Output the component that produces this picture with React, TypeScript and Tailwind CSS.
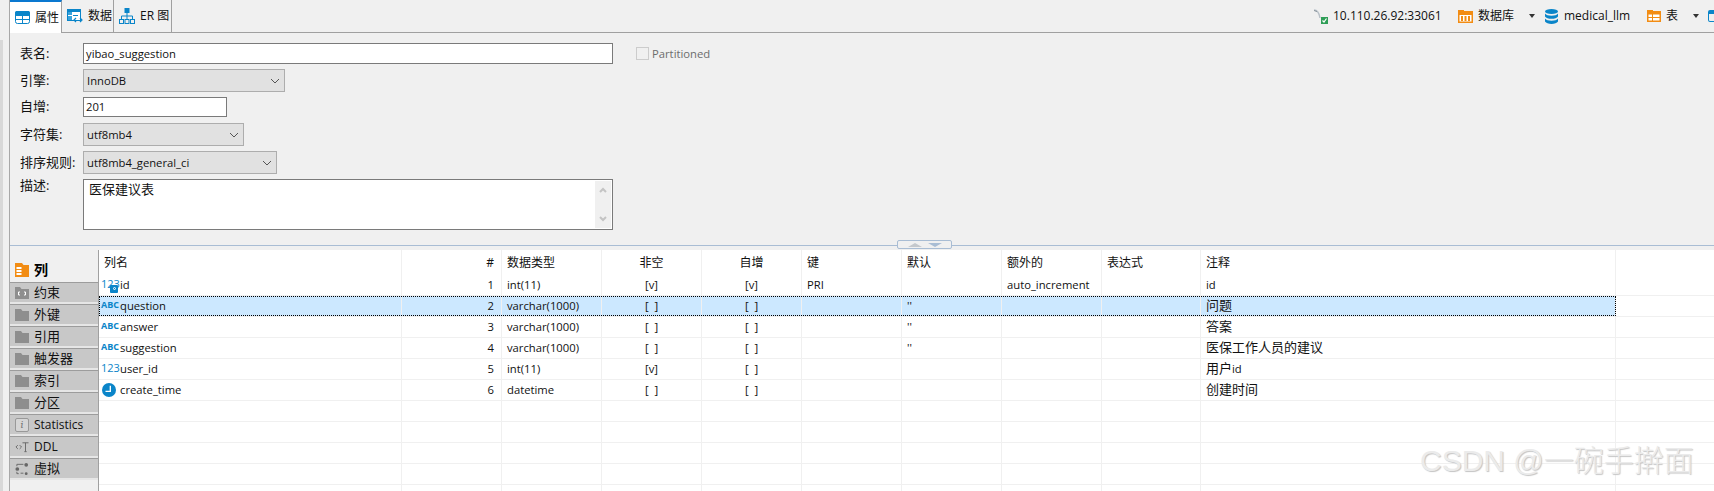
import React from 'react';

const FONT = '[font-family:"Open_Sans","Noto_Sans_CJK_SC",sans-serif]';

function TableTabIcon() {
    return (
        <svg width="15" height="13" viewBox="0 0 15 13">
            <rect x="0.5" y="0.5" width="14" height="12" rx="2" fill="#fff" stroke="#0a85c9" />
            <rect x="0" y="0" width="15" height="5" rx="1.5" fill="#0a85c9" />
            <rect x="7" y="0" width="1" height="13" fill="#0a85c9" />
            <rect x="0" y="8" width="15" height="1" fill="#0a85c9" />
        </svg>
    );
}

function DataTabIcon() {
    return (
        <svg width="16" height="14" viewBox="0 0 16 14">
            <rect x="0.5" y="0.5" width="13" height="11" fill="#fff" stroke="#0a85c9" />
            <rect x="0" y="0" width="14" height="3" fill="#0a85c9" />
            <rect x="1" y="3" width="4" height="8" fill="#39a3dc" />
            <rect x="1" y="6" width="4" height="1" fill="#fff" />
            <rect x="6" y="6" width="5" height="1" fill="#0a85c9" />
            <path d="M9 10l-2 2 2 2M13 10l2 2-2 2" transform="translate(0 -1)" fill="none" stroke="#0a85c9" strokeWidth="1.2" />
        </svg>
    );
}

function ErIcon() {
    return (
        <svg width="16" height="16" viewBox="0 0 16 16" fill="none" stroke="#0a85c9">
            <rect x="6" y="0.5" width="4" height="4" fill="#0a85c9" />
            <path d="M8 5v3M2.5 11V8h11v3M8 8v3" />
            <rect x="0.5" y="11.5" width="4" height="4" />
            <rect x="6" y="11.5" width="4" height="4" />
            <rect x="11.5" y="11.5" width="4" height="4" />
        </svg>
    );
}

function ServerIcon() {
    return (
        <svg width="15" height="15" viewBox="0 0 15 15">
            <path d="M1 1c3 0 5 2 6 8" fill="none" stroke="#b8c0c8" strokeWidth="1.5" />
            <path d="M1 1.500l3 1" stroke="#8a949c" fill="none" />
            <rect x="8" y="8" width="7" height="7" fill="#2f9e57" />
            <path d="M9.500 11.500l1.500 1.500 2.500-3.500" stroke="#fff" fill="none" strokeWidth="1.2" />
        </svg>
    );
}

function OrangeDbIcon() {
    return (
        <svg width="15" height="13" viewBox="0 0 15 13">
            <rect x="0" y="0" width="6" height="3" fill="#f28c13" />
            <rect x="0.750" y="1.750" width="13.500" height="10.500" fill="#fff" stroke="#f28c13" strokeWidth="1.500" />
            <rect x="0" y="2" width="15" height="3" fill="#f28c13" />
            <rect x="3" y="6" width="2" height="5" fill="#f28c13" />
            <rect x="6.500" y="6" width="2" height="5" fill="#f28c13" />
            <rect x="10" y="6" width="2" height="5" fill="#f28c13" />
        </svg>
    );
}

function BlueDbIcon() {
    return (
        <svg width="13" height="15" viewBox="0 0 13 15" fill="#0a85c9">
            <ellipse cx="6.500" cy="2.500" rx="6.500" ry="2.500" />
            <path d="M0 4.500c1 1.600 3.500 2.200 6.500 2.200s5.500-.6 6.500-2.200v3c-1 1.600-3.500 2.300-6.500 2.300S1 9.100 0 7.500z" />
            <path d="M0 9.500c1 1.600 3.500 2.200 6.500 2.200s5.500-.6 6.500-2.200v3c-1 1.600-3.500 2.500-6.500 2.500S1 14.100 0 12.500z" />
        </svg>
    );
}

function OrangeTableIcon() {
    return (
        <svg width="14" height="12" viewBox="0 0 14 12">
            <rect x="0" y="0" width="6" height="3" fill="#f28c13" />
            <rect x="0.750" y="1.750" width="12.500" height="9.500" fill="#fff" stroke="#f28c13" strokeWidth="1.500" />
            <rect x="0" y="2" width="14" height="2.500" fill="#f28c13" />
            <rect x="5" y="4" width="1" height="7" fill="#f28c13" />
            <rect x="1" y="7" width="12" height="1" fill="#f28c13" />
        </svg>
    );
}

function Caret() {
    return <span className="w-0 h-0 shrink-0 border-x-[3.5px] border-x-transparent border-t-[4px] border-t-[#333]" />;
}

function ChevronDown() {
    return (
        <svg width="10" height="6" viewBox="0 0 10 6" fill="none" stroke="#555" strokeWidth="1">
            <path d="M1 1l4 4 4-4" />
        </svg>
    );
}

function FolderIcon() {
    return (
        <svg width="14" height="12" viewBox="0 0 14 12" fill="#8e8e8e">
            <path d="M0 0h6l1.500 2H14v10H0z" />
        </svg>
    );
}

function ColumnsIcon() {
    return (
        <svg width="14" height="14" viewBox="0 0 14 14">
            <path d="M0 0h7l1.500 2H14v12H0z" fill="#f28c13" />
            <rect x="1.500" y="4" width="5" height="2" fill="#fff" />
            <rect x="1.500" y="7" width="5" height="2" fill="#fff" />
            <rect x="1.500" y="10" width="5" height="2" fill="#fff" />
        </svg>
    );
}

function ConstraintIcon() {
    return (
        <svg width="14" height="12" viewBox="0 0 14 12">
            <path d="M0 0h5l1.500 2H14v10H0z" fill="#8e8e8e" />
            <path d="M5 5H3.500v3H5M9 5h1.500v3H9" stroke="#fff" fill="none" />
        </svg>
    );
}

function InfoIcon() {
    return (
        <span className="w-[14px] h-[14px] border border-[#999] rounded-[2px] flex items-center justify-center text-[11px] italic font-serif text-[#777] bg-[#d6d6d6]">
            i
        </span>
    );
}

function DdlIcon() {
    return (
        <svg width="15" height="12" viewBox="0 0 15 12" fill="none" stroke="#666">
            <path d="M3 4L1 6l2 2M5 4l2 2-2 2" />
            <path d="M8 1.500h6.500M11.250 1.500v9.500M10 11h2.500" />
        </svg>
    );
}

function VirtualIcon() {
    return (
        <svg width="15" height="14" viewBox="0 0 15 14" fill="#666">
            <circle cx="12" cy="2.500" r="2" />
            <circle cx="2.500" cy="7" r="2" />
            <circle cx="12" cy="12" r="1.500" />
            <path d="M2 4V2h7M6 11.500h3M2 10v2h2" fill="none" stroke="#666" />
        </svg>
    );
}

function ClockIcon() {
    return (
        <svg width="14" height="14" viewBox="0 0 16 16">
            <circle cx="8" cy="8" r="8" fill="#0a85c9" />
            <path d="M9.500 3v6.500H4" fill="none" stroke="#fff" strokeWidth="1.500" />
        </svg>
    );
}

function TypeIcon({ kind }: { kind: string }) {
    if (kind === 'abc') {
        return <span className="w-[19px] shrink-0 font-bold text-[9px] leading-none text-[#0a85c9] -mt-[3px]">ABC</span>;
    }
    if (kind === 'clock') {
        return <span className="w-[19px] shrink-0 pl-[1px] flex"><ClockIcon /></span>;
    }
    if (kind === 'key') {
        return (
            <span className="w-[19px] shrink-0 relative text-[11px] leading-none text-[#0a85c9] -mt-[4px]">
                123
                <span className="absolute left-[9px] top-[7px] w-[8px] h-[8px] bg-[#0a85c9] rounded-[1px] flex items-center justify-center">
                    <span className="w-[3px] h-[3px] rounded-full border border-white" />
                </span>
            </span>
        );
    }
    return <span className="w-[19px] shrink-0 text-[11px] leading-none text-[#0a85c9] -mt-[4px]">123</span>;
}

const COLUMNS = [
    { name: 'id', icon: 'key', pos: '1', type: 'int(11)', notNull: '[v]', auto: '[v]', key: 'PRI', def: '', extra: 'auto_increment', comment: '', suffix: 'id' },
    { name: 'question', icon: 'abc', pos: '2', type: 'varchar(1000)', notNull: '[  ]', auto: '[  ]', key: '', def: "''", extra: '', comment: '问题', selected: true },
    { name: 'answer', icon: 'abc', pos: '3', type: 'varchar(1000)', notNull: '[  ]', auto: '[  ]', key: '', def: "''", extra: '', comment: '答案' },
    { name: 'suggestion', icon: 'abc', pos: '4', type: 'varchar(1000)', notNull: '[  ]', auto: '[  ]', key: '', def: "''", extra: '', comment: '医保工作人员的建议' },
    { name: 'user_id', icon: '123', pos: '5', type: 'int(11)', notNull: '[v]', auto: '[  ]', key: '', def: '', extra: '', comment: '用户', suffix: 'id' },
    { name: 'create_time', icon: 'clock', pos: '6', type: 'datetime', notNull: '[  ]', auto: '[  ]', key: '', def: '', extra: '', comment: '创建时间' },
];

const SIDE_ITEMS = [
    { label: '约束', icon: <ConstraintIcon /> },
    { label: '外键', icon: <FolderIcon /> },
    { label: '引用', icon: <FolderIcon /> },
    { label: '触发器', icon: <FolderIcon /> },
    { label: '索引', icon: <FolderIcon /> },
    { label: '分区', icon: <FolderIcon /> },
    { label: 'Statistics', icon: <InfoIcon /> },
    { label: 'DDL', icon: <DdlIcon /> },
    { label: '虚拟', icon: <VirtualIcon /> },
];

function Tab({ icon, label, active, width }: { icon: React.ReactNode; label: string; active?: boolean; width: string }) {
    return (
        <div
            className={`${width} h-[33px] flex items-center gap-[5px] pl-[5px] text-[12px] border-r border-[#a0a0a0] ${
                active ? 'bg-white border-t-[2px] border-t-[#0a78d0] -mb-px relative border-r-[#a0a0a0]' : 'bg-[#f0f0f0] border-b border-[#a0a0a0]'
            }`}
        >
            {icon}
            <span>{label}</span>
        </div>
    );
}

function Select({ value, width }: { value: string; width: string }) {
    return (
        <div className={`${width} h-[23px] bg-[#e1e1e1] border border-[#adadad] flex items-center justify-between pl-[3px] pr-[4px]`}>
            <span>{value}</span>
            <ChevronDown />
        </div>
    );
}

function FormRow({ label, children, top }: { label: string; children: React.ReactNode; top?: boolean }) {
    return (
        <div className={`flex ${top ? 'items-start' : 'items-center'}`}>
            <span className={`w-[63px] shrink-0 text-[13px] leading-[18px] whitespace-nowrap ${top ? '-mt-[3px]' : 'pb-[2px]'}`}>{label}</span>
            {children}
        </div>
    );
}

function Cell({ width, children, className = '' }: { width: string; children?: React.ReactNode; className?: string }) {
    return <div className={`${width} shrink-0 h-full flex items-center border-r border-[#f0f0f0] overflow-hidden whitespace-nowrap ${className}`}>{children}</div>;
}

function GridRow({ row }: { row?: (typeof COLUMNS)[number] }) {
    return (
        <div className="h-[21px] shrink-0 flex border-b border-[#f0f0f0]">
            <div className={`flex h-[20px] ${row?.selected ? 'bg-[#cce8ff] outline-1 outline-dotted outline-black -outline-offset-1' : ''}`}>
                <Cell width="w-[303px]" className="pl-[2px]">
                    {row && <TypeIcon kind={row.icon} />}
                    <span>{row?.name}</span>
                </Cell>
                <Cell width="w-[100px]" className="justify-end pr-[7px]">{row?.pos}</Cell>
                <Cell width="w-[100px]" className="pl-[5px]">{row?.type}</Cell>
                <Cell width="w-[100px]" className="justify-center whitespace-pre">{row?.notNull}</Cell>
                <Cell width="w-[100px]" className="justify-center whitespace-pre">{row?.auto}</Cell>
                <Cell width="w-[100px]" className="pl-[5px]">{row?.key}</Cell>
                <Cell width="w-[100px]" className="pl-[5px]">{row?.def}</Cell>
                <Cell width="w-[100px]" className="pl-[5px]">{row?.extra}</Cell>
                <Cell width="w-[99px]" className="pl-[5px]" />
                <Cell width="w-[415px]" className="pl-[5px]">
                    <span className="text-[13px] -mt-[2px]">{row?.comment}</span>
                    <span>{row?.suffix}</span>
                </Cell>
            </div>
        </div>
    );
}

function HeaderCell({ width, children, className = '' }: { width: string; children?: React.ReactNode; className?: string }) {
    return <div className={`${width} shrink-0 h-full pt-[1px] flex items-center border-r border-[#f0f0f0] ${className}`}>{children}</div>;
}

export default function App() {
    return (
        <div className={`relative w-[1714px] h-[491px] overflow-hidden flex bg-[#f0f0f0] text-[11.25px] leading-none text-[#111] ${FONT}`}>
            {/* left gutter */}
            <div className="w-[10px] shrink-0 flex border-r border-[#a8a8a8]">
                <div className="w-[3px] h-full mt-[40px] bg-[#d8d8d8]" />
            </div>

            <div className="flex-1 min-w-0 flex flex-col">
                {/* tabs + connection bar */}
                <div className="h-[33px] shrink-0 flex justify-between border-b border-[#a0a0a0]">
                    <div className="flex">
                        <Tab icon={<TableTabIcon />} label="属性" active width="w-[52px]" />
                        <Tab icon={<DataTabIcon />} label="数据" width="w-[52px]" />
                        <Tab icon={<ErIcon />} label="ER 图" width="w-[58px]" />
                    </div>
                    <div className="flex items-center w-[401px] overflow-hidden shrink-0 text-[12px] [&_svg]:shrink-0">
                        <ServerIcon />
                        <span className="ml-[5px] w-[125px] shrink-0">10.110.26.92:33061</span>
                        <OrangeDbIcon />
                        <span className="ml-[5px] w-[51px] shrink-0">数据库</span>
                        <Caret />
                        <span className="ml-[10px] shrink-0"><BlueDbIcon /></span>
                        <span className="ml-[6px] w-[83px] shrink-0">medical_llm</span>
                        <OrangeTableIcon />
                        <span className="ml-[5px] w-[27px] shrink-0">表</span>
                        <Caret />
                        <span className="ml-[9px] shrink-0 w-[14px] h-[12px] border border-[#0a85c9] border-t-[4px] rounded-[2px]" />
                    </div>
                </div>

                {/* table properties form */}
                <div className="h-[212px] shrink-0 pt-[10px] pl-[10px] flex flex-col gap-[5px]">
                    <FormRow label="表名:">
                        <div className="w-[530px] h-[21px] bg-white border border-[#7a7a7a] flex items-center pl-[2px]">yibao_suggestion</div>
                        <div className="ml-[23px] flex items-center gap-[3px] text-[#6d6d6d]">
                            <span className="w-[13px] h-[13px] border border-[#cccccc]" />
                            <span>Partitioned</span>
                        </div>
                    </FormRow>
                    <FormRow label="引擎:">
                        <Select value="InnoDB" width="w-[202px]" />
                    </FormRow>
                    <div className="mb-px">
                        <FormRow label="自增:">
                            <div className="w-[144px] h-[20px] bg-white border border-[#7a7a7a] flex items-center pl-[2px]">201</div>
                        </FormRow>
                    </div>
                    <FormRow label="字符集:">
                        <Select value="utf8mb4" width="w-[161px]" />
                    </FormRow>
                    <FormRow label="排序规则:">
                        <Select value="utf8mb4_general_ci" width="w-[194px]" />
                    </FormRow>
                    <FormRow label="描述:" top>
                        <div className="w-[530px] h-[51px] bg-white border border-[#7a7a7a] flex justify-between">
                            <span className="pl-[5px] pt-[3px] text-[13px]">医保建议表</span>
                            <div className="w-[16px] mr-px my-px bg-[#f0f0f0] flex flex-col justify-between items-center py-[6px]">
                                <svg width="8" height="6" viewBox="0 0 8 6" fill="none" stroke="#c4c4c4" strokeWidth="2"><path d="M1 5l3-3 3 3" /></svg>
                                <svg width="8" height="6" viewBox="0 0 8 6" fill="none" stroke="#c4c4c4" strokeWidth="2"><path d="M1 1l3 3 3-3" /></svg>
                            </div>
                        </div>
                    </FormRow>
                </div>

                {/* splitter */}
                <div className="h-[5px] shrink-0 border-t border-[#a9bdd4]" />

                {/* columns editor */}
                <div className="flex-1 min-h-0 flex">
                    <div className="w-[89px] shrink-0 flex flex-col border-r border-[#a0a0a0]">
                        <div className="h-[32px] shrink-0 flex items-center gap-[5px] pl-[5px] pt-[8px] font-bold text-[14px] text-black">
                            <ColumnsIcon />
                            <span>列</span>
                        </div>
                        {SIDE_ITEMS.map((item) => (
                            <div key={item.label} className="h-[22px] shrink-0 flex items-center gap-[5px] pl-[5px] bg-[#c8c8c8] border-t border-t-[#9c9c9c] border-b-[2px] border-b-[#e6e6e6]">
                                <span className="w-[14px] flex justify-center">{item.icon}</span>
                                <span className={item.label === 'Statistics' || item.label === 'DDL' ? 'text-[12px]' : 'text-[13px]'}>{item.label}</span>
                            </div>
                        ))}
                    </div>
                    <div className="flex-1 min-w-0 flex flex-col bg-white overflow-hidden">
                        <div className="h-[25px] shrink-0 flex text-[12px]">
                            <HeaderCell width="w-[303px]" className="pl-[5px]">列名</HeaderCell>
                            <HeaderCell width="w-[100px]" className="justify-end pr-[7px]">#</HeaderCell>
                            <HeaderCell width="w-[100px]" className="pl-[5px]">数据类型</HeaderCell>
                            <HeaderCell width="w-[100px]" className="justify-center">非空</HeaderCell>
                            <HeaderCell width="w-[100px]" className="justify-center">自增</HeaderCell>
                            <HeaderCell width="w-[100px]" className="pl-[5px]">键</HeaderCell>
                            <HeaderCell width="w-[100px]" className="pl-[5px]">默认</HeaderCell>
                            <HeaderCell width="w-[100px]" className="pl-[5px]">额外的</HeaderCell>
                            <HeaderCell width="w-[99px]" className="pl-[5px]">表达式</HeaderCell>
                            <HeaderCell width="w-[415px]" className="pl-[5px]">注释</HeaderCell>
                        </div>
                        {COLUMNS.map((row) => (
                            <GridRow key={row.name} row={row} />
                        ))}
                        {[0, 1, 2, 3, 4].map((n) => (
                            <GridRow key={n} />
                        ))}
                    </div>
                </div>
            </div>

            {/* splitter handle */}
            <div className="absolute left-[897px] top-[240px] w-[55px] h-[9px] bg-[#f0f0f0] border border-[#a9bdd4] rounded-[2px] flex items-center justify-center gap-[6px]">
                <span className="w-0 h-0 border-x-[7px] border-x-transparent border-b-[4px] border-b-[#c4c8cc]" />
                <span className="w-0 h-0 border-x-[7px] border-x-transparent border-t-[4px] border-t-[#a9bdd4]" />
            </div>

            {/* watermark */}
            <div className="absolute left-[1420px] top-[443px] text-[30px] leading-[36px] font-light whitespace-nowrap text-[#ebebeb] [text-shadow:1px_1px_1px_#c4c4c4] [font-family:'Liberation_Sans','Noto_Sans_CJK_SC',sans-serif]">
                CSDN @一碗手擀面
            </div>
        </div>
    );
}
